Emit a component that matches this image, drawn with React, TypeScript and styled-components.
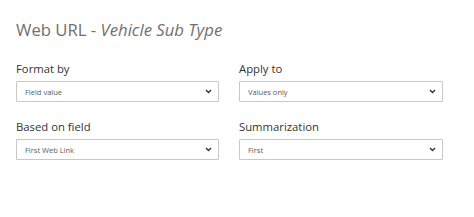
import styled, { createGlobalStyle } from "styled-components";

const GlobalStyle = createGlobalStyle`
  html, body {
    margin: 0;
    padding: 0;
    background: #ffffff;
  }
  body {
    font-family: "Open Sans", "Noto Sans", sans-serif;
  }
`;

const Page = styled.div`
  width: 474px;
  height: 217px;
  box-sizing: border-box;
  padding: 18px 16px 0 16px;
  background: #ffffff;
`;

const Title = styled.h1`
  margin: 0 0 19px 0;
  font-size: 16.7px;
  font-weight: 400;
  line-height: 24px;
  color: #707070;
  white-space: nowrap;

  em {
    font-style: italic;
  }
`;

const Grid = styled.div`
  display: grid;
  grid-template-columns: 203px 204px;
  column-gap: 20px;
  row-gap: 17px;
`;

const Field = styled.div`
  display: flex;
  flex-direction: column;
  gap: 4px;
`;

const Label = styled.div`
  font-size: 11.3px;
  line-height: 16px;
  color: #333333;
`;

const SelectBox = styled.div`
  height: 21px;
  box-sizing: border-box;
  border: 1px solid #c8c8c8;
  border-radius: 1px;
  display: flex;
  align-items: center;
  justify-content: space-between;
  padding: 0 6px 0 8px;
  background: #ffffff;
`;

const SelectValue = styled.span`
  font-size: 7.5px;
  color: #5a5a5a;
`;

const Chevron = () => (
  <svg width="7" height="5" viewBox="0 0 7 5" aria-hidden>
    <path d="M1 1 L3.5 3.5 L6 1" fill="none" stroke="#333" strokeWidth="1.4" />
  </svg>
);

interface DropdownProps {
  label: string;
  value: string;
}
const Dropdown = ({ label, value }: DropdownProps) => (
  <Field>
    <Label>{label}</Label>
    <SelectBox>
      <SelectValue>{value}</SelectValue>
      <Chevron />
    </SelectBox>
  </Field>
);

const App = () => (
  <>
    <GlobalStyle />
    <Page>
      <Title>
        Web URL - <em>Vehicle Sub Type</em>
      </Title>
      <Grid>
        <Dropdown label="Format by" value="Field value" />
        <Dropdown label="Apply to" value="Values only" />
        <Dropdown label="Based on field" value="First Web Link" />
        <Dropdown label="Summarization" value="First" />
      </Grid>
    </Page>
  </>
);

export default App;
